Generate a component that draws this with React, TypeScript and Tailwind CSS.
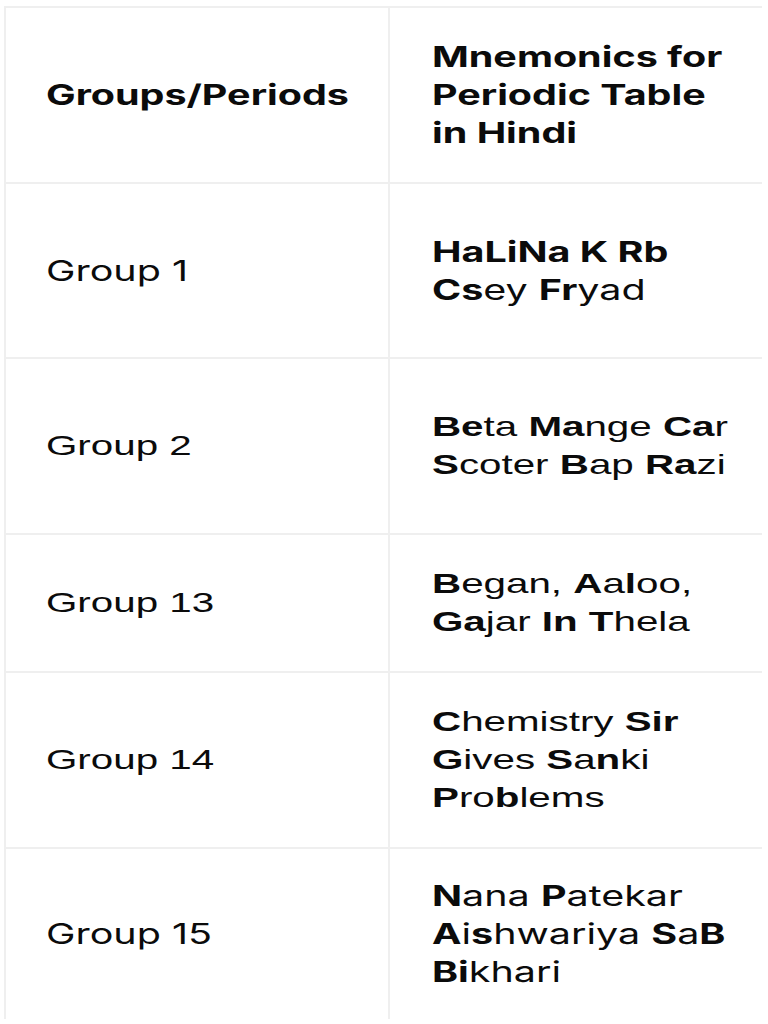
import React from "react";

type Row = {
  label: string;
  lines: string[];
  height: string;
  font: "inter" | "arial";
  last?: boolean;
};

const ROWS: Row[] = [
  { label: "Group 1", lines: ["**HaLiNa K Rb**", "**Cs**ey **Fr**yad"], height: "h-[175px]", font: "inter" },
  { label: "Group 2", lines: ["**Be**ta **Ma**nge **Ca**r", "**S**coter **B**ap **Ra**zi"], height: "h-[176px]", font: "arial" },
  { label: "Group 13", lines: ["**B**egan, **A**a**l**oo,", "**Ga**jar **In** **T**hela"], height: "h-[138px]", font: "arial" },
  { label: "Group 14", lines: ["**C**hemistry **Sir**", "**G**ives **S**a**n**ki", "**P**ro**b**lems"], height: "h-[176px]", font: "arial" },
  { label: "Group 15", lines: ["**N**ana **P**atekar", "**A**i**s**hwariya **S**a**B**", "**Bi**khari"], height: "h-[170px]", font: "inter", last: true },
];

// "**x**" marks the bold letters of each element symbol
function Marked({ text }: { text: string }) {
  const parts = text.split("**");
  return (
    <>
      {parts.map((part, i) =>
        i % 2 === 1 ? (
          <span key={i} className="font-bold">{part}</span>
        ) : (
          <span key={i}>{part}</span>
        )
      )}
    </>
  );
}

function fontClass(font: Row["font"]) {
  return font === "inter"
    ? "font-['Inter',sans-serif] origin-left scale-x-[1.41]"
    : "font-['Liberation_Sans',Arial,sans-serif] origin-left scale-x-[1.44]";
}

export default function App() {
  return (
    <div className="w-[768px] h-[1024px] overflow-hidden bg-white pt-[6px] pl-[4px] text-[28px] text-[#0b0b0b]">
      <div className="w-[758px] border-l-2 border-t-2 border-[#efefef]">
        <div className="grid grid-cols-[384px_1fr] h-[176px] border-b-2 border-[#efefef]">
          <div className="flex items-center overflow-hidden border-r-2 border-[#efefef] pl-[40px]">
            <span className="inline-block whitespace-nowrap font-bold font-['Inter',sans-serif] origin-left scale-x-[1.41]">Groups/Periods</span>
          </div>
          <div className="flex flex-col justify-center overflow-hidden pl-[42px] leading-[38px]">
            {["Mnemonics for", "Periodic Table", "in Hindi"].map((line) => (
              <div key={line} className="whitespace-nowrap font-bold font-['Inter',sans-serif] origin-left scale-x-[1.41]">
                {line}
              </div>
            ))}
          </div>
        </div>

        {ROWS.map((row) => (
          <div
            key={row.label}
            className={`grid grid-cols-[384px_1fr] ${row.height} ${row.last ? "" : "border-b-2 border-[#efefef]"}`}
          >
            <div className="flex items-center overflow-hidden border-r-2 border-[#efefef] pl-[40px]">
              <span className={`inline-block whitespace-nowrap ${fontClass(row.font)}`}>{row.label}</span>
            </div>
            <div className="flex flex-col justify-center overflow-hidden pl-[42px] leading-[38px]">
              {row.lines.map((line) => (
                <div key={line} className={`whitespace-nowrap ${fontClass(row.font)}`}>
                  <Marked text={line} />
                </div>
              ))}
            </div>
          </div>
        ))}
      </div>
    </div>
  );
}
